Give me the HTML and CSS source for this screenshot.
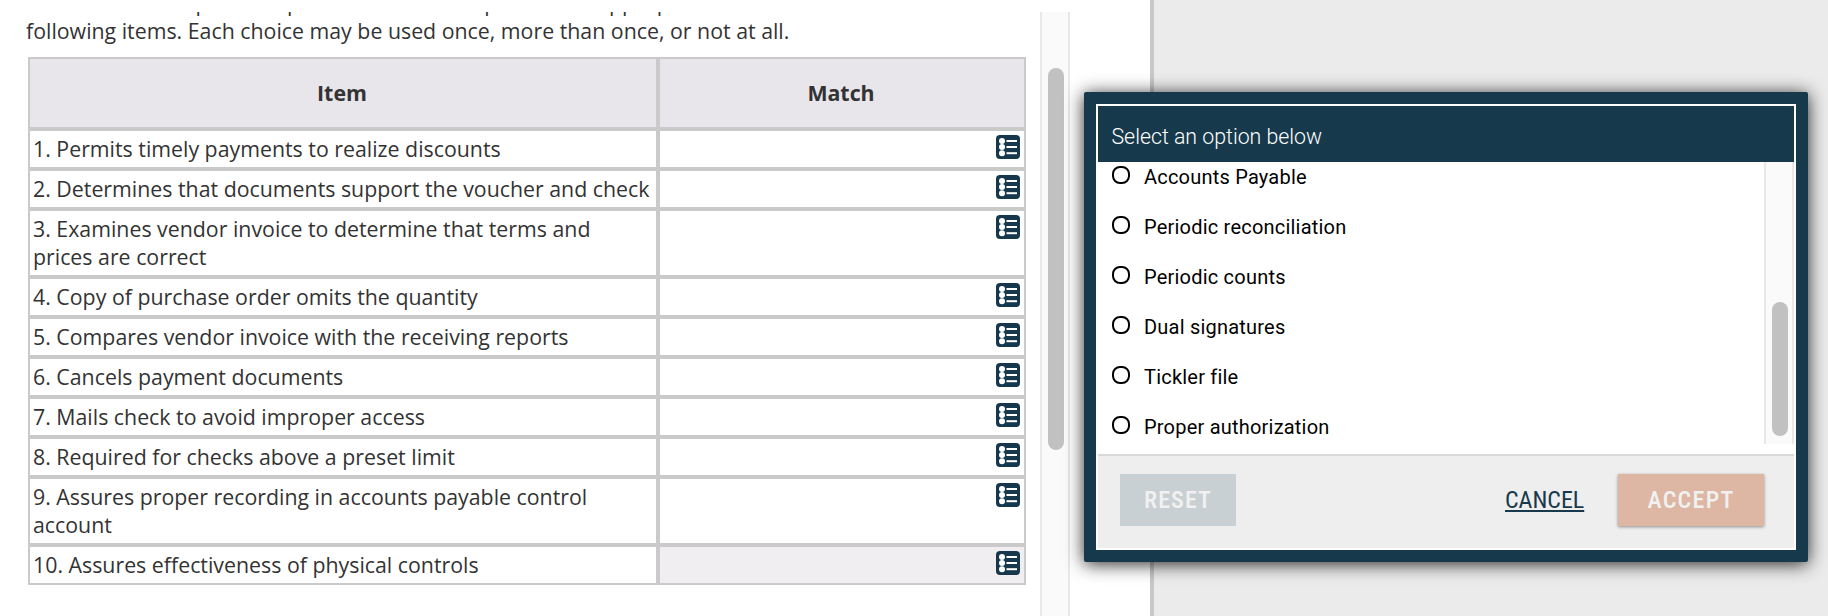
FILE: index.html
```html
<!DOCTYPE html>
<html lang="en">
<head>
<meta charset="utf-8">
<title>Matching exercise</title>
<link rel="stylesheet" href="styles.css">
</head>
<body>
<svg class="sprite" aria-hidden="true">
  <symbol id="list" viewBox="0 0 24 24">
    <rect width="24" height="24" rx="4" fill="#16384c"/>
    <g fill="#fff">
      <circle cx="6" cy="6" r="3"/><circle cx="6" cy="12" r="3"/><circle cx="6" cy="18.2" r="3"/>
      <rect x="10.5" y="5" width="10.5" height="2"/><rect x="10.5" y="11" width="10.5" height="2"/><rect x="10.5" y="17.2" width="10.5" height="2"/>
    </g>
  </symbol>
</svg>
<div class="layout">
  <main class="question">
    <div class="content">
      <p class="intro">Select from the option list provided<span class="tight"> the best response most appropriate</span><br>following items. Each choice may be used once, more than once, or not at all.</p>
      <table class="match">
        <thead><tr><th class="item-col">Item</th><th>Match</th></tr></thead>
        <tbody>
          <tr><td>1. Permits timely payments to realize discounts</td><td class="pick"><svg><use href="#list"/></svg></td></tr>
          <tr><td>2. Determines that documents support the voucher and check</td><td class="pick"><svg><use href="#list"/></svg></td></tr>
          <tr><td>3. Examines vendor invoice to determine that terms and<br>prices are correct</td><td class="pick"><svg><use href="#list"/></svg></td></tr>
          <tr><td>4. Copy of purchase order omits the quantity</td><td class="pick"><svg><use href="#list"/></svg></td></tr>
          <tr><td>5. Compares vendor invoice with the receiving reports</td><td class="pick"><svg><use href="#list"/></svg></td></tr>
          <tr><td>6. Cancels payment documents</td><td class="pick"><svg><use href="#list"/></svg></td></tr>
          <tr><td>7. Mails check to avoid improper access</td><td class="pick"><svg><use href="#list"/></svg></td></tr>
          <tr><td>8. Required for checks above a preset limit</td><td class="pick"><svg><use href="#list"/></svg></td></tr>
          <tr><td>9. Assures proper recording in accounts payable control<br>account</td><td class="pick"><svg><use href="#list"/></svg></td></tr>
          <tr><td>10. Assures effectiveness of physical controls</td><td class="pick active"><svg><use href="#list"/></svg></td></tr>
        </tbody>
      </table>
    </div>
    <div class="track page-track"><div class="thumb page-thumb"></div></div>
  </main>
  <aside class="side"></aside>
</div>
<section class="dialog">
  <div class="dialog-inner">
    <header class="dialog-head">Select an option below</header>
    <div class="dialog-body">
      <ul class="options">
        <li><i></i>Accounts Payable</li>
        <li><i></i>Periodic reconciliation</li>
        <li><i></i>Periodic counts</li>
        <li><i></i>Dual signatures</li>
        <li><i></i>Tickler file</li>
        <li><i></i>Proper authorization</li>
      </ul>
      <div class="track dialog-track"><div class="thumb dialog-thumb"></div></div>
    </div>
    <footer class="dialog-foot">
      <button class="btn reset"><span>RESET</span></button>
      <a class="cancel"><span>CANCEL</span></a>
      <button class="btn accept"><span>ACCEPT</span></button>
    </footer>
  </div>
</section>
</body>
</html>
```
FILE: styles.css
```css
* { box-sizing: border-box; }
body { margin: 0; height: 616px; overflow: hidden; position: relative; background: #fff; color: #333; font-family: "Open Sans", sans-serif; font-size: 21.33px; line-height: 28px; }
.sprite { display: none; }
.layout { display: flex; height: 616px; }
.question { display: flex; width: 1150px; padding-top: 12px; }
.content { display: flex; flex-direction: column; justify-content: flex-start; width: 1040px; height: 604px; overflow: hidden; padding-left: 26px; }
.intro { flex: none; margin: -23px 0 0; height: 68px; white-space: nowrap; }
.tight { word-spacing: -4.8px; }
.match { flex: none; margin-left: 2px; width: 998px; table-layout: fixed; border-collapse: separate; border-spacing: 0; }
.match th, .match td { border: 2px solid #cacaca; }
.match th { height: 72px; padding: 0 2px 0 0; background: #e8e6ea; font-weight: 700; }
.item-col { width: 630px; }
.match td { padding: 4px 3px; vertical-align: top; white-space: nowrap; }
.match td.pick { padding: 4px; text-align: right; line-height: 0; }
.match td.active { background: #f1eef2; }
.pick svg { width: 24px; height: 24px; }
.track { width: 30px; background: #fafafa; border: solid #e8e8e8; border-width: 0 2px; }
.thumb { width: 16px; margin-left: 6px; border-radius: 8px; background: #c1c1c1; }
.page-thumb { height: 382px; margin-top: 56px; }
.side { flex: 1; background: #ebebeb; border-left: 4px solid #c8c8c8; }
.dialog { position: absolute; left: 1084px; top: 92px; width: 724px; height: 470px; padding: 12px; background: #17394c; border-radius: 2px; box-shadow: 0 2px 18px rgba(0,0,0,.85); font-family: Roboto, sans-serif; }
.dialog-inner { height: 446px; border: 2px solid #fff; background: #fff; display: flex; flex-direction: column; }
.dialog-head { height: 56px; padding: 17px 13.5px 0; background: #17394c; color: #fff; font-size: 21.3px; font-weight: 350; line-height: 28px; }
.dialog-body { height: 292px; display: flex; justify-content: space-between; }
.options { margin: 0; padding: 1px 0 0 14px; list-style: none; color: #000; font-size: 20px; letter-spacing: .21px; }
.options li { height: 50px; display: flex; gap: 14px; }
.options i { width: 18px; height: 18px; margin-top: 3px; border: 2px solid #000; border-radius: 8px; }
.dialog-track { height: 282px; }
.dialog-thumb { height: 134px; margin-top: 140px; }
.dialog-foot { height: 94px; border-top: 2px solid #d9d9d9; background: #eee; display: flex; padding: 18px 30px 0 22px; }
.btn { height: 52px; border: 0; padding: 0; color: #f1f1f1; font: 500 24px/52px Roboto, sans-serif; font-stretch: 75%; letter-spacing: 1.1px; }
.reset { width: 116px; background: #c9d0d4; margin-right: auto; }
.accept { width: 146px; background: #ddb6a4; box-shadow: 0 1px 3px rgba(0,0,0,.4); letter-spacing: 1.3px; }
.cancel { width: 79px; margin-right: 34px; color: #17394c; font-size: 24px; font-stretch: 75%; line-height: 52px; text-decoration: underline; }
```
